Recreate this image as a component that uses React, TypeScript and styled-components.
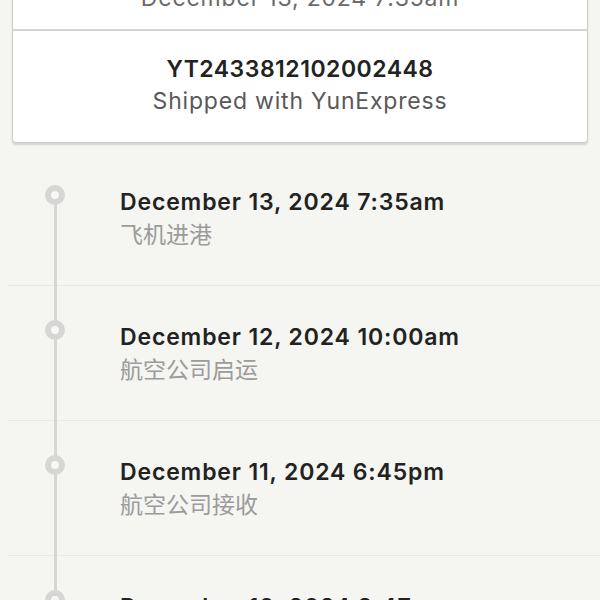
import React from "react";
import styled, { createGlobalStyle } from "styled-components";

const GlobalStyle = createGlobalStyle`
  html, body {
    margin: 0;
    padding: 0;
    background: #f5f5f1;
  }
  body {
    font-family: Inter, "Noto Sans", "Noto Sans CJK SC", sans-serif;
    overflow: hidden;
  }
`;

const Page = styled.div`
  width: 600px;
  min-height: 600px;
  background: #f5f5f1;
  display: flex;
  flex-direction: column;
`;

const Card = styled.div`
  margin: -41px 12px 0 12px;
  background: #ffffff;
  border: 1px solid #cfcfcb;
  border-radius: 4px;
  box-shadow: 0 2px 2px rgba(0, 0, 0, 0.14);
  display: flex;
  flex-direction: column;
`;

const CardSection = styled.div<{ $divider?: boolean; $pt: number; $pb: number }>`
  padding: ${(p) => p.$pt}px 16px ${(p) => p.$pb}px;
  border-bottom: ${(p) => (p.$divider ? "2px solid #d4d4d0" : "none")};
  display: flex;
  flex-direction: column;
  align-items: center;
  text-align: center;
`;

const Muted = styled.div`
  font-size: 23px;
  line-height: 28px;
  letter-spacing: 0.8px;
  color: #6a6a6a;
  font-weight: 400;
`;

const Tracking = styled.div`
  font-size: 23px;
  line-height: 28px;
  letter-spacing: 0.5px;
  font-weight: 600;
  color: #222222;
`;

const Carrier = styled.div`
  margin-top: 4px;
  font-size: 23px;
  line-height: 28px;
  letter-spacing: 0.8px;
  font-weight: 400;
  color: #595959;
`;

const Timeline = styled.div`
  margin-top: 8px;
  display: flex;
  flex-direction: column;
`;

const Row = styled.div`
  margin-left: 8px;
  height: 134px;
  border-bottom: 1px solid #e8e8e4;
  display: flex;
  flex-shrink: 0;
`;

const Marker = styled.div<{ $first?: boolean }>`
  position: relative;
  width: 112px;
  flex-shrink: 0;
  &::before {
    content: "";
    position: absolute;
    left: 46px;
    width: 3px;
    top: ${(p) => (p.$first ? "44px" : "0")};
    bottom: -1px;
    background: #d6d6d4;
  }
`;

const Dot = styled.span`
  position: absolute;
  left: 37px;
  top: 34px;
  width: 20px;
  height: 20px;
  box-sizing: border-box;
  border-radius: 50%;
  border: 6px solid #d6d6d4;
  background: #f7f7f4;
  z-index: 1;
`;

const Body = styled.div`
  padding-top: 37px;
  display: flex;
  flex-direction: column;
`;

const When = styled.div`
  font-size: 23px;
  line-height: 28px;
  letter-spacing: 0.85px;
  font-weight: 600;
  color: #222222;
`;

const What = styled.div`
  margin-top: 3px;
  font-family: "Noto Sans CJK SC", "Noto Sans", sans-serif;
  font-size: 23px;
  line-height: 28px;
  color: #9b9b9b;
`;

const events = [
  { when: "December 13, 2024 7:35am", what: "飞机进港" },
  { when: "December 12, 2024 10:00am", what: "航空公司启运" },
  { when: "December 11, 2024 6:45pm", what: "航空公司接收" },
  { when: "December 10, 2024 8:47am", what: "已到达分拣中心" },
];

export default function App() {
  return (
    <Page>
      <GlobalStyle />
      <Card>
        <CardSection $divider $pt={24} $pb={17}>
          <Muted>December 13, 2024 7:35am</Muted>
        </CardSection>
        <CardSection $pt={24} $pb={27}>
          <Tracking>YT2433812102002448</Tracking>
          <Carrier>Shipped with YunExpress</Carrier>
        </CardSection>
      </Card>
      <Timeline>
        {events.map((e, i) => (
          <Row key={i}>
            <Marker $first={i === 0}>
              <Dot />
            </Marker>
            <Body>
              <When>{e.when}</When>
              <What>{e.what}</What>
            </Body>
          </Row>
        ))}
      </Timeline>
    </Page>
  );
}
